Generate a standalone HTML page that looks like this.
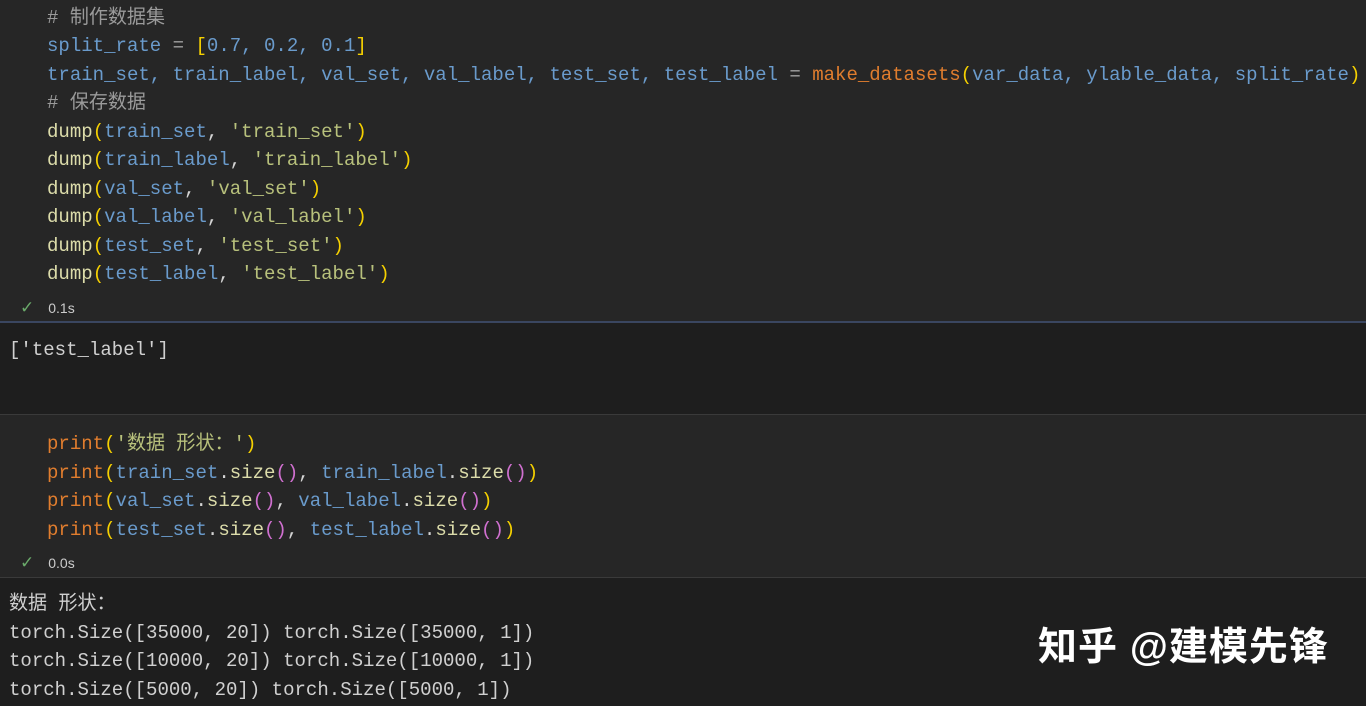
<!DOCTYPE html>
<html><head><meta charset="utf-8"><style>
body{margin:0;width:1366px;height:706px;overflow:hidden;background:#1e1e1e;font-family:"Liberation Mono","Noto Sans CJK SC",monospace;font-size:19.05px;}
.cell{position:absolute;left:0;width:1366px;background:#262626;}
.out{position:absolute;left:0;width:1366px;background:#1e1e1e;}
.l{position:absolute;left:47px;white-space:pre;line-height:28px;color:#d4d4d4;}
.o{position:absolute;left:9px;white-space:pre;line-height:28px;color:#d0d0d0;}
.v{color:#6a9bcc}.s{color:#b8c17c}.f{color:#dcdcaa}.p{color:#e07d2e}.b{color:#f5d000}.m{color:#d070d0}.c{color:#9a9a9a}.e{color:#a0a0a0}
.st{position:absolute;left:20px;font-family:"Liberation Sans",sans-serif;font-size:14px;color:#ccc;}
.st i{color:#6aaa6a;font-style:normal;font-size:17px;margin-right:14px;}
</style></head><body>
<div class="cell" style="top:0;height:322px"></div>
<div style="position:absolute;top:321px;left:0;width:1366px;height:2px;background:#3a4660"></div>
<div class="out" style="top:323px;height:91px"></div>
<div style="position:absolute;top:414px;left:0;width:1366px;height:1px;background:#3a3a3a"></div>
<div class="cell" style="top:415px;height:162px"></div>
<div style="position:absolute;top:577px;left:0;width:1366px;height:1px;background:#3a3a3a"></div>

<div class="l c" style="top:4px"># 制作数据集</div>
<div class="l" style="top:32px"><span class="v">split_rate</span> <span class="e">=</span> <span class="b">[</span><span class="v">0.7, 0.2, 0.1</span><span class="b">]</span></div>
<div class="l" style="top:61px"><span class="v">train_set, train_label, val_set, val_label, test_set, test_label</span> <span class="e">=</span> <span class="p">make_datasets</span><span class="b">(</span><span class="v">var_data, ylable_data, split_rate</span><span class="b">)</span></div>
<div class="l c" style="top:89px"># 保存数据</div>
<div class="l" style="top:118px"><span class="f">dump</span><span class="b">(</span><span class="v">train_set</span>, <span class="s">'train_set'</span><span class="b">)</span></div>
<div class="l" style="top:146px"><span class="f">dump</span><span class="b">(</span><span class="v">train_label</span>, <span class="s">'train_label'</span><span class="b">)</span></div>
<div class="l" style="top:175px"><span class="f">dump</span><span class="b">(</span><span class="v">val_set</span>, <span class="s">'val_set'</span><span class="b">)</span></div>
<div class="l" style="top:203px"><span class="f">dump</span><span class="b">(</span><span class="v">val_label</span>, <span class="s">'val_label'</span><span class="b">)</span></div>
<div class="l" style="top:232px"><span class="f">dump</span><span class="b">(</span><span class="v">test_set</span>, <span class="s">'test_set'</span><span class="b">)</span></div>
<div class="l" style="top:260px"><span class="f">dump</span><span class="b">(</span><span class="v">test_label</span>, <span class="s">'test_label'</span><span class="b">)</span></div>
<div class="st" style="top:298px"><i>✓</i>0.1s</div>

<div class="o" style="top:336px">['test_label']</div>

<div class="l" style="top:430px"><span class="p">print</span><span class="b">(</span><span class="s">'数据 形状：'</span><span class="b">)</span></div>
<div class="l" style="top:459px"><span class="p">print</span><span class="b">(</span><span class="v">train_set</span>.<span class="f">size</span><span class="m">()</span>, <span class="v">train_label</span>.<span class="f">size</span><span class="m">()</span><span class="b">)</span></div>
<div class="l" style="top:487px"><span class="p">print</span><span class="b">(</span><span class="v">val_set</span>.<span class="f">size</span><span class="m">()</span>, <span class="v">val_label</span>.<span class="f">size</span><span class="m">()</span><span class="b">)</span></div>
<div class="l" style="top:516px"><span class="p">print</span><span class="b">(</span><span class="v">test_set</span>.<span class="f">size</span><span class="m">()</span>, <span class="v">test_label</span>.<span class="f">size</span><span class="m">()</span><span class="b">)</span></div>
<div class="st" style="top:553px"><i>✓</i>0.0s</div>

<div class="o" style="top:590px">数据 形状：</div>
<div class="o" style="top:619px">torch.Size([35000, 20]) torch.Size([35000, 1])</div>
<div class="o" style="top:647px">torch.Size([10000, 20]) torch.Size([10000, 1])</div>
<div class="o" style="top:676px">torch.Size([5000, 20]) torch.Size([5000, 1])</div>

<div style="position:absolute;left:1038px;top:623px;font-family:'Liberation Sans','Noto Sans CJK SC',sans-serif;font-size:39px;font-weight:bold;color:#fff;white-space:nowrap;line-height:50px;letter-spacing:1px">知乎 @建模先锋</div>
</body></html>
